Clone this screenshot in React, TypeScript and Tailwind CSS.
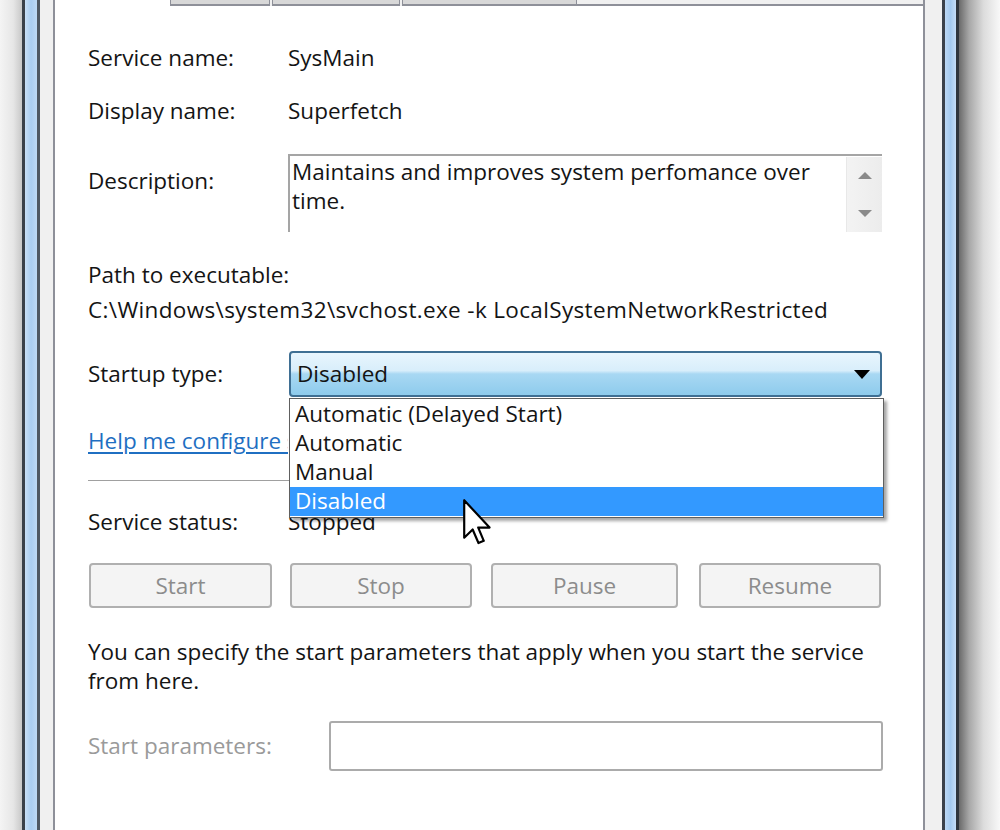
import React from "react";

const font = { fontFamily: '"Open Sans", "Noto Sans", Arial, sans-serif' };

function Cursor() {
  return (
    <svg width="29" height="46" viewBox="0 0 12 19" className="absolute left-[173px] top-[100px] z-30">
      <path
        d="M0.5 0.5 L0.5 16 L4 12.6 L6.4 18.2 L8.6 17.3 L6.3 11.8 L11 11.8 Z"
        fill="#fff"
        stroke="#000"
        strokeWidth="0.9"
        strokeLinejoin="round"
      />
    </svg>
  );
}

function ScrollArrow({ up }: { up?: boolean }) {
  return (
    <svg width="16" height="9" viewBox="0 0 16 9">
      <path d={up ? "M1 8 L8 1 L15 8 Z" : "M1 1 L8 8 L15 1 Z"} fill="#8a8a8a" />
    </svg>
  );
}

const buttons = [
  { label: "Start", w: "w-[183px]", ml: "ml-[1px]" },
  { label: "Stop", w: "w-[182px]", ml: "ml-[18px]" },
  { label: "Pause", w: "w-[187px]", ml: "ml-[19px]" },
  { label: "Resume", w: "w-[182px]", ml: "ml-[21px]" },
];

const options = ["Automatic (Delayed Start)", "Automatic", "Manual", "Disabled"];

export default function App() {
  return (
    <div className="flex h-[830px] w-[1000px] overflow-hidden bg-white text-[22.5px] text-[#141414]" style={font}>
      {/* left frame */}
      <div className="w-[22px] shrink-0 bg-[linear-gradient(to_right,#f4f4f4,#e6e6e6_60%,#c8c8c8)]" />
      <div className="w-[3px] shrink-0 bg-[#3a414a]" />
      <div className="w-[12px] shrink-0 bg-[linear-gradient(to_right,#c9e0f7,#a9cdf1_50%,#bcd8f5)]" />
      <div className="w-[3px] shrink-0 bg-[#4d5763]" />
      <div className="w-[13px] shrink-0 bg-[#f0f0f0]" />

      {/* tab panel */}
      <div className="flex w-[872px] shrink-0 flex-col bg-[#f0f0f0]">
        {/* tab strip bottoms */}
        <div className="flex h-[6px] shrink-0">
          <div className="w-[117px] border-l-2 border-[#8e9099] bg-white" />
          <div className="w-[100px] border-x border-b-2 border-[#8e9099] bg-[#d8d8d8]" />
          <div className="ml-[2px] w-[128px] border-x border-b-2 border-[#8e9099] bg-[#d8d8d8]" />
          <div className="ml-[2px] w-[175px] border-x border-b-2 border-[#8e9099] bg-[#d8d8d8]" />
          <div className="flex-1 border-b-2 border-r-2 border-[#8e9099] bg-[#f0f0f0]" />
        </div>

        <div className="flex flex-1 flex-col border-x-2 border-[#8e9099] bg-white pl-[33px]">
          <div className="mt-[38px] flex h-[28px] items-center">
            <span className="w-[200px]">Service name:</span>
            <span>SysMain</span>
          </div>
          <div className="mt-[25px] flex h-[28px] items-center">
            <span className="w-[200px]">Display name:</span>
            <span>Superfetch</span>
          </div>

          <div className="mt-[29px] flex h-[78px] items-start">
            <span className="mt-[13px] w-[200px] leading-[28px]">Description:</span>
            <div className="relative flex h-full w-[594px] border-l-2 border-t-2 border-[#a5a5a5]">
              <div className="flex-1 pl-[2px] pt-[1px] leading-[29px]">
                Maintains and improves system perfomance over
                <br />
                time.
              </div>
              <div className="mt-[1px] flex w-[36px] flex-col items-center justify-between border-l border-[#e8e8e8] bg-[linear-gradient(to_right,#f3f3f3,#ececec)] py-[14px]">
                <ScrollArrow up />
                <ScrollArrow />
              </div>
            </div>
          </div>

          <div className="mt-[29px] flex h-[28px] items-center">Path to executable:</div>
          <div className="mt-[7px] flex h-[28px] items-center whitespace-nowrap tracking-[0.35px]">
            C:\Windows\system32\svchost.exe -k LocalSystemNetworkRestricted
          </div>

          <div className="relative z-20 mt-[27px] flex h-[46px] items-center">
            <span className="w-[201px]">Startup type:</span>
            <div className="flex h-full w-[593px] items-center justify-between rounded-[4px] border-2 border-[#3f6f93] bg-[linear-gradient(to_bottom,#e8f5fd_0%,#d8eefb_42%,#a8d8f3_50%,#8ecbec_100%)] pl-[6px] pr-[10px]">
              <span>Disabled</span>
              <svg width="16" height="9" viewBox="0 0 16 9">
                <path d="M0 0 L16 0 L8 9 Z" fill="#000" />
              </svg>
            </div>

            {/* open list */}
            <div className="absolute left-[201px] top-[47px] w-[595px] border border-[#5f5f5f] bg-white py-[1px] shadow-[3px_3px_3px_rgba(0,0,0,0.35)]">
              {options.map((o) => (
                <div
                  key={o}
                  className={`flex h-[29px] items-center pl-[5px] leading-none ${
                    o === "Disabled" ? "bg-[#3399ff] text-white" : ""
                  }`}
                >
                  {o}
                </div>
              ))}
              <Cursor />
            </div>
          </div>

          <div className="mt-[30px] flex h-[28px] items-center">
            <div className="w-[200px] overflow-hidden whitespace-nowrap">
              <span className="text-[#1f6fc2] underline underline-offset-[3px]">
                Help me configure service recovery options.
              </span>
            </div>
          </div>

          <div className="mt-[25px] h-[2px] w-[794px] border-t border-b border-t-[#a0a0a0] border-b-white" />

          <div className="mt-[26px] flex h-[28px] items-center">
            <span className="w-[200px]">Service status:</span>
            <span>Stopped</span>
          </div>

          <div className="mt-[27px] flex h-[45px]">
            {buttons.map((b) => (
              <div
                key={b.label}
                className={`${b.w} ${b.ml} flex items-center justify-center rounded-[4px] border-2 border-[#b0b0b0] bg-[#f4f4f4] text-[#8c8c8c]`}
              >
                {b.label}
              </div>
            ))}
          </div>

          <div className="mt-[29px] w-[800px] leading-[29px]">
            You can specify the start parameters that apply when you start the service
            <br />
            from here.
          </div>

          <div className="mt-[26px] flex h-[50px] items-center">
            <span className="w-[241px] text-[#9a9a9a]">Start parameters:</span>
            <div className="h-full w-[554px] rounded-[3px] border-2 border-[#ababab] bg-white" />
          </div>
        </div>
      </div>

      {/* right frame */}
      <div className="w-[17px] shrink-0 bg-[#f0f0f0]" />
      <div className="w-[3px] shrink-0 bg-[#3a414a]" />
      <div className="w-[11px] shrink-0 bg-[linear-gradient(to_right,#bcd8f5,#a3c9ef_50%,#c4ddf7)]" />
      <div className="w-[3px] shrink-0 bg-[#2e353d]" />
      <div className="flex-1 bg-[linear-gradient(to_right,#6a6a6a,#a8a8a8_25%,#dcdcdc_60%,#f8f8f8)]" />
    </div>
  );
}
